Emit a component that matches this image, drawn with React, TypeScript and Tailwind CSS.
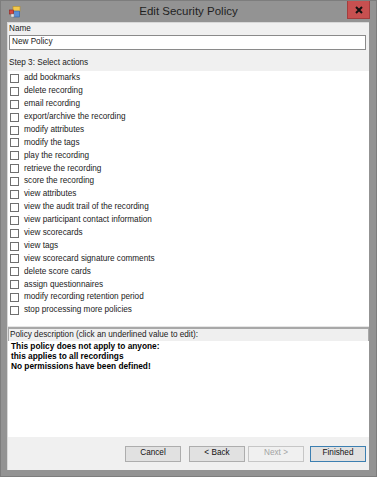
const actions = [
  "add bookmarks",
  "delete recording",
  "email recording",
  "export/archive the recording",
  "modify attributes",
  "modify the tags",
  "play the recording",
  "retrieve the recording",
  "score the recording",
  "view attributes",
  "view the audit trail of the recording",
  "view participant contact information",
  "view scorecards",
  "view tags",
  "view scorecard signature comments",
  "delete score cards",
  "assign questionnaires",
  "modify recording retention period",
  "stop processing more policies",
]

function AppIcon() {
  return (
    <svg width="12" height="12" viewBox="0 0 12 12">
      <rect x="4" y="0.5" width="7" height="5" fill="#f2c94c" stroke="#b8912a" strokeWidth="0.6" />
      <rect x="4.5" y="5" width="6" height="6" fill="#5b8fd6" stroke="#2f5f9e" strokeWidth="0.6" />
      <rect x="0.5" y="4" width="4" height="4" fill="#d9463d" stroke="#8f2520" strokeWidth="0.6" />
      <rect x="2" y="8" width="3" height="3" fill="#e7e7e7" stroke="#888" strokeWidth="0.5" />
    </svg>
  )
}

export default function App() {
  return (
    <div
      className="w-[377px] h-[477px] bg-[#939393] flex flex-col border border-[#7d7d7d] overflow-hidden"
      style={{ fontFamily: '"Liberation Sans", Arial, sans-serif' }}
    >
      {/* Title bar */}
      <div className="relative h-[21px] flex items-center justify-center shrink-0">
        <div className="absolute left-[8px] top-[5px]">
          <AppIcon />
        </div>
        <span className="text-[11.5px] text-[#1f1f1f] leading-none">Edit Security Policy</span>
        <div className="absolute right-[6px] top-[-1px] w-[23px] h-[19px] bg-[#c75050] border border-[#a33d3d] flex items-center justify-center">
          <svg width="8" height="8" viewBox="0 0 8 8">
            <path d="M1 1 L7 7 M7 1 L1 7" stroke="#111" strokeWidth="2" />
          </svg>
        </div>
      </div>

      {/* Client area */}
      <div className="flex-1 ml-[6px] mr-[7px] mb-[6px] bg-[#f0f0f0] flex flex-col text-[8.2px] text-[#1a1a1a] border-l border-t border-[#d8d8d8]">
        <div className="h-[12px] flex items-center pl-[1px]">Name</div>
        <div className="ml-[1px] mr-[3px] h-[15px] bg-white border border-[#8a8a8a] flex items-center pl-[2px]">
          New Policy
        </div>
        <div className="h-[21px] flex items-end pb-[2px] pl-[1px]">Step 3: Select actions</div>

        {/* Action list */}
        <div className="h-[256px] bg-white pt-[1px] border-b border-[#e6e6e6]">
          {actions.map((a) => (
            <div key={a} className="h-[12.9px] flex items-center pl-[2px]">
              <div className="w-[9px] h-[9px] border border-[#6f6f6f] bg-white shrink-0" />
              <span className="ml-[5px] whitespace-nowrap">{a}</span>
            </div>
          ))}
        </div>

        {/* Description */}
        <div className="h-[2px] bg-[#a8a8a8]" />
        <div className="h-[12px] bg-[#efefef] border-x border-[#a8a8a8] flex items-center pl-[1px]">
          Policy description (click an underlined value to edit):
        </div>
        <div className="h-[96px] bg-white pl-[3px] text-[8.3px] font-bold leading-[10px] text-black">
          <div>This policy does not apply to anyone:</div>
          <div>this applies to all recordings</div>
          <div>No permissions have been defined!</div>
        </div>

        {/* Buttons */}
        <div className="flex-1 flex items-center pl-[117px]">
          <button className="w-[56px] h-[16px] bg-[#e1e1e1] border border-[#adadad] text-[8.2px] text-[#111]">
            Cancel
          </button>
          <button className="ml-[8px] w-[56px] h-[16px] bg-[#e1e1e1] border border-[#adadad] text-[8.2px] text-[#111]">
            &lt; Back
          </button>
          <button className="ml-[3px] w-[56px] h-[16px] bg-[#f0f0f0] border border-[#c6c6c6] text-[8.2px] text-[#a3a3a3]">
            Next &gt;
          </button>
          <button className="ml-[6px] w-[56px] h-[16px] bg-[#e1e1e1] border border-[#3c7fb1] text-[8.2px] text-[#111]">
            Finished
          </button>
        </div>
      </div>
    </div>
  )
}
